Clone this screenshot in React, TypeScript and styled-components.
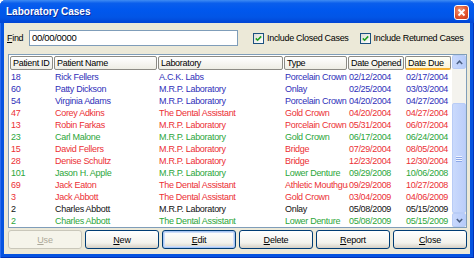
import React from 'react';
import styled, { createGlobalStyle } from 'styled-components';

const GlobalStyle = createGlobalStyle`
  html, body {
    margin: 0;
    padding: 0;
    background: #fff;
  }
  body {
    font-family: "Liberation Sans", Arial, sans-serif;
  }
`;

const Window = styled.div`
  width: 474px;
  height: 258px;
  box-sizing: border-box;
  display: flex;
  flex-direction: column;
  background: #0553E0;
  padding: 0 4px 4px 4px;
  border-radius: 6px 6px 0 0;
  overflow: hidden;
  box-shadow: inset 1px 0 0 #2B6CF0, inset -1px 0 0 #0031B8, inset 0 -1px 0 #0031B8;
`;

const TitleBar = styled.div`
  height: 23px;
  margin: 0 -4px;
  padding: 0 5px 0 6px;
  display: flex;
  align-items: center;
  justify-content: space-between;
  background: linear-gradient(#3F8CF3 0%, #0A5EEC 14%, #0058EE 40%, #0255E6 75%, #0245D4 100%);
`;

const Title = styled.span`
  color: #fff;
  font-weight: bold;
  font-size: 10px;
  letter-spacing: 0;
  text-shadow: 1px 1px 0 #0A2E9C;
`;

const CloseButton = styled.div`
  width: 15px;
  height: 15px;
  box-sizing: border-box;
  margin-top: 1px;
  border: 1px solid #fff;
  border-radius: 3px;
  background: radial-gradient(circle at 40% 35%, #F09B79, #E0502B 60%, #C2391A);
  display: flex;
  align-items: center;
  justify-content: center;
`;

const Client = styled.div`
  flex: 1;
  display: flex;
  flex-direction: column;
  background: #ECE9D8;
  padding: 7px 3px 5px 4px;
`;

const FindRow = styled.div`
  display: flex;
  align-items: center;
  height: 16px;
  font-size: 9px;
  letter-spacing: -0.3px;
  color: #000;
`;

const FindLabel = styled.span`
  margin-left: -1px;
  width: 22px;
`;

const FindInput = styled.div`
  width: 209px;
  height: 16px;
  box-sizing: border-box;
  border: 1px solid #7F9DB9;
  background: #fff;
  padding-left: 2px;
  font-size: 9.5px;
  line-height: 14px;
`;

const CheckLabel = styled.label<{ $left: number }>`
  display: flex;
  align-items: center;
  margin-left: ${p => p.$left}px;
  gap: 3px;
`;

const CheckBox = styled.span`
  width: 11px;
  height: 11px;
  box-sizing: border-box;
  border: 1px solid #1C5180;
  background: linear-gradient(135deg, #DCDCD7, #fff);
  display: flex;
  align-items: center;
  justify-content: center;
`;

const Grid = styled.div`
  margin-top: 8px;
  height: 174px;
  box-sizing: border-box;
  border: 1px solid #7F9DB9;
  background: #fff;
  display: flex;
`;

const GridMain = styled.div`
  flex: 1;
  display: flex;
  flex-direction: column;
  overflow: hidden;
`;

const cols = '44px 104px 126px 64px 57px 1fr';

const HeaderRow = styled.div`
  display: grid;
  grid-template-columns: ${cols};
  height: 16px;
  padding: 1px 0 0 1px;
  box-sizing: border-box;
`;

const HeaderCell = styled.div<{ $hot?: boolean }>`
  height: 14px;
  box-sizing: border-box;
  margin-right: 1px;
  border: 1px solid #8C8B84;
  border-bottom: ${p => (p.$hot ? '2px solid #F8B330' : '1px solid #8C8B84')};
  border-radius: 2px;
  background: ${p => (p.$hot ? 'linear-gradient(#FFFFF6, #FBF5DA)' : 'linear-gradient(#FFFFFF, #EEEDE4)')};
  padding-left: 2px;
  font-size: 9px;
  letter-spacing: -0.3px;
  line-height: 12px;
  white-space: nowrap;
  overflow: hidden;
  color: #000;
`;

const Row = styled.div<{ $color: string }>`
  display: grid;
  grid-template-columns: ${cols};
  height: 12px;
  padding-left: 1px;
  color: ${p => p.$color};
  font-size: 9px;
  letter-spacing: -0.3px;
  line-height: 12px;
`;

const Cell = styled.div`
  white-space: nowrap;
  overflow: hidden;
  padding-left: 1px;
`;

const ScrollBar = styled.div`
  width: 14px;
  display: flex;
  flex-direction: column;
  background: #F4F3EE;
`;

const ScrollArrow = styled.div`
  height: 14px;
  box-sizing: border-box;
  border: 1px solid #B8CCF6;
  border-radius: 2px;
  background: linear-gradient(90deg, #C8D8FC, #B6CBFA);
  display: flex;
  align-items: center;
  justify-content: center;
`;

const ScrollTrack = styled.div`
  flex: 1;
  display: flex;
  flex-direction: column;
  padding-top: 34px;
`;

const ScrollThumb = styled.div`
  flex: 1;
  border: 1px solid #B8CCF6;
  border-radius: 2px;
  background: linear-gradient(90deg, #CADAFC, #BBCEFA);
  display: flex;
  flex-direction: column;
  align-items: center;
  justify-content: center;
  gap: 1px;
`;

const Grip = styled.div`
  width: 6px;
  height: 1px;
  background: #EEF3FE;
  box-shadow: 0 1px 0 #8CA8E8;
`;

const ButtonRow = styled.div`
  margin-top: 2px;
  display: flex;
  gap: 3px;
`;

const Button = styled.div<{ $disabled?: boolean; $focused?: boolean }>`
  flex: 1;
  height: 19px;
  box-sizing: border-box;
  border: 1px solid ${p => (p.$disabled ? '#C9C7BA' : '#003C74')};
  border-radius: 3px;
  background: ${p => (p.$disabled ? '#F5F4EA' : 'linear-gradient(#FFFFFF, #F3F2EC 70%, #D6D0C5)')};
  box-shadow: ${p => (p.$focused ? 'inset 0 0 0 1px #A9C6F4, inset 0 0 0 2px #CEDDF8' : 'none')};
  color: ${p => (p.$disabled ? '#ACA899' : '#000')};
  font-size: 9px;
  letter-spacing: -0.2px;
  display: flex;
  align-items: center;
  justify-content: center;
`;

const BLUE = '#2F2FB9';
const RED = '#EC3035';
const GREEN = '#2CA63A';
const BLACK = '#111';

const cases: [string, string, string, string, string, string, string][] = [
  ['18', 'Rick Fellers', 'A.C.K. Labs', 'Porcelain Crown', '02/12/2004', '02/17/2004', BLUE],
  ['60', 'Patty Dickson', 'M.R.P. Laboratory', 'Onlay', '02/25/2004', '03/03/2004', BLUE],
  ['54', 'Virginia Adams', 'M.R.P. Laboratory', 'Porcelain Crown', '04/20/2004', '04/27/2004', BLUE],
  ['47', 'Corey Adkins', 'The Dental Assistant', 'Gold Crown', '04/20/2004', '04/27/2004', RED],
  ['13', 'Robin Farkas', 'M.R.P. Laboratory', 'Porcelain Crown', '05/31/2004', '06/07/2004', RED],
  ['23', 'Carl Malone', 'M.R.P. Laboratory', 'Gold Crown', '06/17/2004', '06/24/2004', GREEN],
  ['15', 'David Fellers', 'M.R.P. Laboratory', 'Bridge', '07/29/2004', '08/05/2004', RED],
  ['28', 'Denise Schultz', 'M.R.P. Laboratory', 'Bridge', '12/23/2004', '12/30/2004', RED],
  ['101', 'Jason H. Apple', 'M.R.P. Laboratory', 'Lower Denture', '09/29/2008', '10/06/2008', GREEN],
  ['69', 'Jack Eaton', 'The Dental Assistant', 'Athletic Mouthguard', '09/29/2008', '10/27/2008', RED],
  ['3', 'Jack Abbott', 'The Dental Assistant', 'Gold Crown', '03/04/2009', '04/06/2009', RED],
  ['2', 'Charles Abbott', 'M.R.P. Laboratory', 'Onlay', '05/08/2009', '05/15/2009', BLACK],
  ['2', 'Charles Abbott', 'The Dental Assistant', 'Lower Denture', '05/08/2009', '05/15/2009', GREEN],
];

const headers = ['Patient ID', 'Patient Name', 'Laboratory', 'Type', 'Date Opened', 'Date Due'];

const Check = () => (
  <svg width="7" height="7" viewBox="0 0 7 7">
    <path d="M0.8 3.4 L2.6 5.2 L6.2 1.4" fill="none" stroke="#21A121" strokeWidth="1.6" />
  </svg>
);

const Arrow = ({ up }: { up?: boolean }) => (
  <svg width="7" height="5" viewBox="0 0 7 5">
    <path d={up ? 'M0.8 4 L3.5 1.2 L6.2 4' : 'M0.8 1 L3.5 3.8 L6.2 1'} fill="none" stroke="#4D6185" strokeWidth="1.5" />
  </svg>
);

const App = () => {
  return (
    <>
      <GlobalStyle />
      <Window>
        <TitleBar>
          <Title>Laboratory Cases</Title>
          <CloseButton>
            <svg width="9" height="9" viewBox="0 0 9 9">
              <path d="M1.5 1.5 L7.5 7.5 M7.5 1.5 L1.5 7.5" stroke="#fff" strokeWidth="1.8" />
            </svg>
          </CloseButton>
        </TitleBar>
        <Client>
          <FindRow>
            <FindLabel><u>F</u>ind</FindLabel>
            <FindInput>00/00/0000</FindInput>
            <CheckLabel $left={15}>
              <CheckBox><Check /></CheckBox>
              Include Closed Cases
            </CheckLabel>
            <CheckLabel $left={11}>
              <CheckBox><Check /></CheckBox>
              Include Returned Cases
            </CheckLabel>
          </FindRow>

          <Grid>
            <GridMain>
              <HeaderRow>
                {headers.map((h, i) => (
                  <HeaderCell key={h} $hot={i === headers.length - 1}>{h}</HeaderCell>
                ))}
              </HeaderRow>
              {cases.map((c, i) => (
                <Row key={i} $color={c[6]}>
                  {c.slice(0, 6).map((v, j) => (
                    <Cell key={j}>{v}</Cell>
                  ))}
                </Row>
              ))}
            </GridMain>
            <ScrollBar>
              <ScrollArrow><Arrow up /></ScrollArrow>
              <ScrollTrack>
                <ScrollThumb>
                  <Grip />
                  <Grip />
                  <Grip />
                </ScrollThumb>
              </ScrollTrack>
              <ScrollArrow><Arrow /></ScrollArrow>
            </ScrollBar>
          </Grid>

          <ButtonRow>
            <Button $disabled><span><u>U</u>se</span></Button>
            <Button><span><u>N</u>ew</span></Button>
            <Button $focused><span><u>E</u>dit</span></Button>
            <Button><span><u>D</u>elete</span></Button>
            <Button><span><u>R</u>eport</span></Button>
            <Button><span><u>C</u>lose</span></Button>
          </ButtonRow>
        </Client>
      </Window>
    </>
  );
};

export default App;
